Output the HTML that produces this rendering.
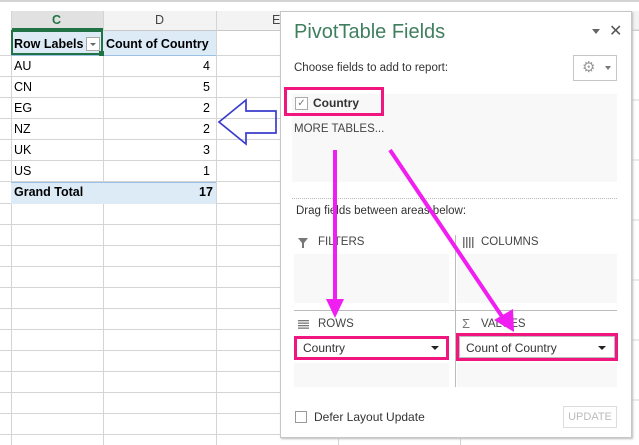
<!DOCTYPE html><html><head><style>
body{margin:0;width:639px;height:445px;overflow:hidden;background:#fff;font-family:"Liberation Sans",sans-serif;position:relative}
.a{position:absolute}
.t{font-size:12.5px;color:#000}
</style></head><body>
<div class="a" style="left:0;top:0;width:639px;height:2px;background:#d4d4d4"></div>
<div class="a" style="left:11px;top:11px;width:628px;height:19px;background:#f3f3f3;border-bottom:1px solid #c8c8c8"></div>
<div class="a" style="left:11px;top:11px;width:92px;height:19px;background:#e1e1e1;border-bottom:2px solid #217346;box-sizing:border-box"></div>
<div class="a t" style="left:52px;top:13px;color:#217346;font-weight:bold">C</div>
<div class="a t" style="left:155px;top:13px;color:#444">D</div>
<div class="a t" style="left:272px;top:13px;color:#444">E</div>
<svg class="a" style="left:0;top:0" width="639" height="445">
<g stroke="#d4d4d4" stroke-width="1">
<line x1="11.5" y1="11" x2="11.5" y2="445"/><line x1="103.5" y1="11" x2="103.5" y2="445"/><line x1="216.5" y1="11" x2="216.5" y2="445"/>
<line x1="0" y1="55.5" x2="280" y2="55.5"/><line x1="0" y1="76.5" x2="280" y2="76.5"/><line x1="0" y1="97.5" x2="280" y2="97.5"/><line x1="0" y1="118.5" x2="280" y2="118.5"/><line x1="0" y1="139.5" x2="280" y2="139.5"/><line x1="0" y1="160.5" x2="280" y2="160.5"/><line x1="0" y1="181.5" x2="280" y2="181.5"/><line x1="0" y1="203.5" x2="280" y2="203.5"/><line x1="0" y1="224.5" x2="280" y2="224.5"/><line x1="0" y1="245.5" x2="280" y2="245.5"/><line x1="0" y1="266.5" x2="280" y2="266.5"/><line x1="0" y1="287.5" x2="280" y2="287.5"/><line x1="0" y1="308.5" x2="280" y2="308.5"/><line x1="0" y1="329.5" x2="280" y2="329.5"/><line x1="0" y1="350.5" x2="280" y2="350.5"/><line x1="0" y1="371.5" x2="280" y2="371.5"/><line x1="0" y1="392.5" x2="280" y2="392.5"/><line x1="0" y1="413.5" x2="280" y2="413.5"/><line x1="0" y1="434.5" x2="280" y2="434.5"/>
<line x1="632" y1="30" x2="639" y2="30"/><line x1="632" y1="100" x2="639" y2="100"/><line x1="632" y1="160" x2="639" y2="160"/><line x1="632" y1="220" x2="639" y2="220"/><line x1="632" y1="280" x2="639" y2="280"/><line x1="632" y1="340" x2="639" y2="340"/><line x1="632" y1="400" x2="639" y2="400"/>
<line x1="338.5" y1="437" x2="338.5" y2="445"/><line x1="460.5" y1="437" x2="460.5" y2="445"/>
</g>
</svg>
<div class="a" style="left:11px;top:31px;width:205px;height:24px;background:#ddebf7;border-bottom:1px solid #9bc2e6"></div>
<div class="a" style="left:11px;top:182px;width:205px;height:21px;background:#ddebf7;border-top:1px solid #9bc2e6"></div>
<div class="a" style="left:11px;top:30px;width:92px;height:25px;border:2px solid #217346;box-sizing:border-box"></div>
<div class="a" style="left:99px;top:51px;width:5px;height:5px;background:#217346"></div>
<div class="a" style="left:86px;top:37px;width:14px;height:14px;border:1px solid #aaa;background:#fff;box-sizing:border-box"></div>
<div class="a" style="left:90px;top:43px;width:0;height:0;border-left:3px solid transparent;border-right:3px solid transparent;border-top:3px solid #666"></div>
<div class="a t" style="left:14px;top:37px;font-weight:bold">Row Labels</div>
<div class="a t" style="left:106px;top:37px;font-weight:bold">Count of Country</div>
<div class="a t" style="left:14px;top:59px">AU</div><div class="a t" style="left:203px;top:59px">4</div>
<div class="a t" style="left:14px;top:80px">CN</div><div class="a t" style="left:203px;top:80px">5</div>
<div class="a t" style="left:14px;top:101px">EG</div><div class="a t" style="left:203px;top:101px">2</div>
<div class="a t" style="left:14px;top:122px">NZ</div><div class="a t" style="left:203px;top:122px">2</div>
<div class="a t" style="left:14px;top:143px">UK</div><div class="a t" style="left:203px;top:143px">3</div>
<div class="a t" style="left:14px;top:164px">US</div><div class="a t" style="left:203px;top:164px">1</div>
<div class="a t" style="left:14px;top:185px;font-weight:bold">Grand Total</div><div class="a t" style="left:199px;top:185px;font-weight:bold">17</div>
<div class="a" style="left:280px;top:11px;width:352px;height:427px;background:#fff;border:1px solid #c6c6c6;box-sizing:border-box;box-shadow:1px 1px 2px #bbb"></div>
<div class="a" style="left:294px;top:21px;font-size:20px;color:#3f7f5f">PivotTable Fields</div>
<div class="a" style="left:592px;top:29px;width:0;height:0;border-left:4px solid transparent;border-right:4px solid transparent;border-top:5px solid #666"></div>
<div class="a" style="left:609px;top:21px;font-size:16px;color:#555">✕</div>
<div class="a" style="left:294px;top:62px;font-size:11.5px;color:#333">Choose fields to add to report:</div>
<div class="a" style="left:573px;top:55px;width:44px;height:26px;border:1px solid #c6c6c6;box-sizing:border-box"></div>
<div class="a" style="left:582px;top:58px;font-size:15px;color:#999">⚙</div>
<div class="a" style="left:605px;top:66px;width:0;height:0;border-left:3px solid transparent;border-right:3px solid transparent;border-top:4px solid #777"></div>
<div class="a" style="left:292px;top:94px;width:325px;height:88px;background:#f8f8f8"></div>
<div class="a" style="left:295px;top:97px;width:11px;height:11px;border:1px solid #aaa;background:#fff;font-size:10px;line-height:11px;color:#777;text-align:center">✓</div>
<div class="a" style="left:313px;top:96px;font-size:12px;font-weight:bold;color:#333">Country</div>
<div class="a" style="left:284px;top:87px;width:100px;height:29px;border:3px solid #f0157f;box-sizing:border-box"></div>
<div class="a" style="left:294px;top:123px;font-size:11.5px;color:#444">MORE TABLES...</div>
<div class="a" style="left:292px;top:198px;width:325px;border-top:1px dotted #bbb"></div>
<div class="a" style="left:296px;top:205px;font-size:11.5px;color:#333">Drag fields between areas below:</div>
<div class="a" style="left:294px;top:254px;width:155px;height:49px;background:#f8f8f8"></div>
<div class="a" style="left:457px;top:254px;width:160px;height:49px;background:#f8f8f8"></div>
<div class="a" style="left:294px;top:363px;width:155px;height:24px;background:#f8f8f8"></div>
<div class="a" style="left:457px;top:363px;width:160px;height:24px;background:#f8f8f8"></div>
<div class="a" style="left:455px;top:235px;width:1px;height:152px;background:#bbb"></div>
<div class="a" style="left:294px;top:310px;width:323px;height:1px;background:#bbb"></div>
<svg class="a" style="left:298px;top:238px" width="10" height="10"><path d="M0 0H10L6 5V10H4V5Z" fill="#777"/></svg>
<div class="a" style="left:318px;top:236px;font-size:11.5px;color:#444">FILTERS</div>
<svg class="a" style="left:463px;top:237px" width="12" height="11"><g fill="#777"><rect x="0" y="0" width="1.5" height="11"/><rect x="3" y="0" width="1.5" height="11"/><rect x="6" y="0" width="1.5" height="11"/><rect x="9" y="0" width="1.5" height="11"/></g></svg>
<div class="a" style="left:481px;top:236px;font-size:11.5px;color:#444">COLUMNS</div>
<svg class="a" style="left:298px;top:320px" width="11" height="9"><g fill="#777"><rect y="0" width="11" height="1.3"/><rect y="2.5" width="11" height="1.3"/><rect y="5" width="11" height="1.3"/><rect y="7.5" width="11" height="1.3"/></g></svg>
<div class="a" style="left:318px;top:318px;font-size:11.5px;color:#444">ROWS</div>
<div class="a" style="left:462px;top:316px;font-size:13px;color:#777">Σ</div>
<div class="a" style="left:481px;top:318px;font-size:11.5px;color:#444">VALUES</div>
<div class="a" style="left:294px;top:336px;width:155px;height:24px;border:3px solid #f0157f;box-sizing:border-box;background:#fff"></div>
<div class="a" style="left:303px;top:341px;font-size:12px;color:#333">Country</div>
<div class="a" style="left:431px;top:346px;width:0;height:0;border-left:4px solid transparent;border-right:4px solid transparent;border-top:4px solid #222"></div>
<div class="a" style="left:456px;top:333px;width:162px;height:28px;border:3px solid #f0157f;box-sizing:border-box;background:#fff"></div>
<div class="a" style="left:459px;top:336px;width:156px;height:22px;border:1px solid #bbb;box-sizing:border-box"></div>
<div class="a" style="left:466px;top:341px;font-size:12px;color:#333">Count of Country</div>
<div class="a" style="left:598px;top:346px;width:0;height:0;border-left:4px solid transparent;border-right:4px solid transparent;border-top:4px solid #222"></div>
<div class="a" style="left:295px;top:411px;width:12px;height:12px;border:1px solid #999;box-sizing:border-box"></div>
<div class="a" style="left:314px;top:410px;font-size:12px;color:#333">Defer Layout Update</div>
<div class="a" style="left:563px;top:406px;width:54px;height:22px;border:1px solid #ddd;box-sizing:border-box;font-size:11px;color:#bbb;text-align:center;line-height:20px">UPDATE</div>
<svg class="a" style="left:0;top:0" width="639" height="445">
<path d="M219 122L246 100V111H276V133H246V144Z" fill="none" stroke="#3a3dcc" stroke-width="1.7"/>
<line x1="335" y1="150" x2="335" y2="300" stroke="#f01ef0" stroke-width="4"/>
<path d="M326 299L344 299L335 318Z" fill="#f01ef0"/>
<line x1="390" y1="150" x2="503" y2="318" stroke="#f01ef0" stroke-width="4"/>
<path d="M494 320L513 309L514 332Z" fill="#f01ef0"/>
</svg>
</body></html>
